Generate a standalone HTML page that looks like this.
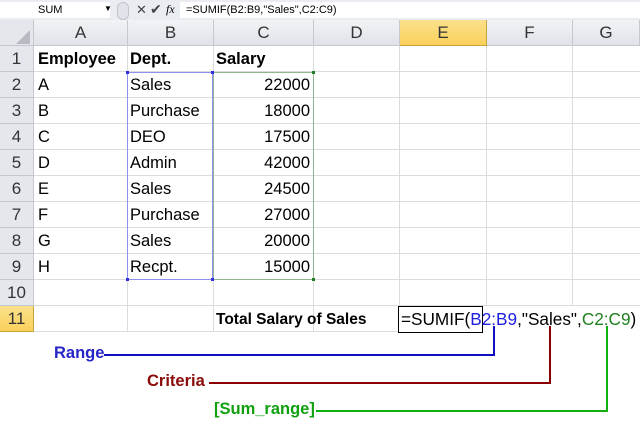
<!DOCTYPE html>
<html><head><style>
body{margin:0;width:640px;height:436px;overflow:hidden;background:#fff;font-family:"Liberation Sans",sans-serif;position:relative}
.a{position:absolute;white-space:nowrap}
.hl{position:absolute;background:#dadcdd}
.ch{position:absolute;top:20px;height:26px;background:linear-gradient(#f1f3f6,#dfe3e8);border-right:1px solid #c5c9cf;border-bottom:1px solid #c5c9cf;box-sizing:border-box;text-align:center;font-size:17px;line-height:26px;color:#333}
.rh{position:absolute;left:0;width:34px;height:26px;background:#e4e7ec;border-bottom:1px solid #c5c9cf;border-right:1px solid #c5c9cf;box-sizing:border-box;text-align:center;font-size:17px;line-height:26px;color:#333}
.c{position:absolute;font-size:16.5px;line-height:26px;color:#000;white-space:nowrap}
.r{text-align:right}
</style></head><body>
<div class="a" style="left:0;top:0;width:640px;height:20px;background:#e9edf2;border-bottom:1px solid #c5c9cf"></div>
<div class="a" style="left:0;top:2px;width:110px;height:16px;background:#fff;font-size:11px;line-height:16px;padding-left:38px;box-sizing:border-box">SUM</div>
<div class="a" style="left:104px;top:4px;font-size:8px">▼</div>
<div class="a" style="left:117px;top:2px;width:10px;height:16px;border-radius:8px;background:#e0e4ea;border:1px solid #c0c4ca"></div>
<div class="a" style="left:136px;top:2px;font-size:13px;color:#444">✕</div>
<div class="a" style="left:150px;top:1px;font-size:14px;color:#444">✔</div>
<div class="a" style="left:166px;top:2px;font-size:12px;font-style:italic;font-family:'Liberation Serif',serif">fx</div>
<div class="a" style="left:180px;top:2px;width:460px;height:16px;background:#fff;font-size:11px;line-height:16px;padding-left:6px;box-sizing:border-box">=SUMIF(B2:B9,"Sales",C2:C9)</div>
<div class="a" style="left:0;top:20px;width:34px;height:26px;background:#e4e7ec;border-right:1px solid #c5c9cf;border-bottom:1px solid #c5c9cf;box-sizing:border-box"></div>
<div class="a" style="left:16px;top:30px;width:0;height:0;border-left:14px solid transparent;border-bottom:14px solid #b8bcc2"></div>
<div class="ch" style="left:34px;width:94px">A</div>
<div class="ch" style="left:128px;width:86px">B</div>
<div class="ch" style="left:214px;width:100px">C</div>
<div class="ch" style="left:314px;width:86px">D</div>
<div class="ch" style="left:400px;width:87px;background:linear-gradient(#fbe08c,#f9d15a);border-color:#c9a33c">E</div>
<div class="ch" style="left:487px;width:86px">F</div>
<div class="ch" style="left:573px;width:67px">G</div>
<div class="hl" style="left:127px;top:46px;width:1px;height:286px"></div>
<div class="hl" style="left:213px;top:46px;width:1px;height:286px"></div>
<div class="hl" style="left:313px;top:46px;width:1px;height:286px"></div>
<div class="hl" style="left:399px;top:46px;width:1px;height:286px"></div>
<div class="hl" style="left:486px;top:46px;width:1px;height:286px"></div>
<div class="hl" style="left:572px;top:46px;width:1px;height:286px"></div>
<div class="hl" style="left:34px;top:71px;width:606px;height:1px"></div>
<div class="hl" style="left:34px;top:97px;width:606px;height:1px"></div>
<div class="hl" style="left:34px;top:123px;width:606px;height:1px"></div>
<div class="hl" style="left:34px;top:149px;width:606px;height:1px"></div>
<div class="hl" style="left:34px;top:175px;width:606px;height:1px"></div>
<div class="hl" style="left:34px;top:201px;width:606px;height:1px"></div>
<div class="hl" style="left:34px;top:227px;width:606px;height:1px"></div>
<div class="hl" style="left:34px;top:253px;width:606px;height:1px"></div>
<div class="hl" style="left:34px;top:279px;width:606px;height:1px"></div>
<div class="hl" style="left:34px;top:305px;width:606px;height:1px"></div>
<div class="hl" style="left:34px;top:331px;width:606px;height:1px"></div>
<div class="rh" style="top:46px">1</div>
<div class="rh" style="top:72px">2</div>
<div class="rh" style="top:98px">3</div>
<div class="rh" style="top:124px">4</div>
<div class="rh" style="top:150px">5</div>
<div class="rh" style="top:176px">6</div>
<div class="rh" style="top:202px">7</div>
<div class="rh" style="top:228px">8</div>
<div class="rh" style="top:254px">9</div>
<div class="rh" style="top:280px">10</div>
<div class="rh" style="top:306px;background:linear-gradient(#fbe08c,#f9d15a);border-color:#c9a33c">11</div>
<div class="a" style="left:127px;top:72px;width:86px;height:208px;border:1px solid #9090f0;box-sizing:border-box"></div>
<div class="a" style="left:213px;top:72px;width:101px;height:208px;border:1px solid #90b890;box-sizing:border-box"></div>
<div class="a" style="left:126px;top:71px;width:3px;height:3px;background:#3030e0"></div>
<div class="a" style="left:211px;top:71px;width:3px;height:3px;background:#3030e0"></div>
<div class="a" style="left:126px;top:278px;width:3px;height:3px;background:#3030e0"></div>
<div class="a" style="left:211px;top:278px;width:3px;height:3px;background:#3030e0"></div>
<div class="a" style="left:312px;top:71px;width:3px;height:3px;background:#208020"></div>
<div class="a" style="left:312px;top:278px;width:3px;height:3px;background:#208020"></div>
<div class="c" style="left:38px;top:46px;font-weight:bold">Employee</div>
<div class="c" style="left:130px;top:46px;font-weight:bold">Dept.</div>
<div class="c" style="left:216px;top:46px;font-weight:bold">Salary</div>
<div class="c" style="left:38px;top:72px">A</div><div class="c" style="left:130px;top:72px">Sales</div><div class="c r" style="left:214px;width:96px;top:72px">22000</div>
<div class="c" style="left:38px;top:98px">B</div><div class="c" style="left:130px;top:98px">Purchase</div><div class="c r" style="left:214px;width:96px;top:98px">18000</div>
<div class="c" style="left:38px;top:124px">C</div><div class="c" style="left:130px;top:124px">DEO</div><div class="c r" style="left:214px;width:96px;top:124px">17500</div>
<div class="c" style="left:38px;top:150px">D</div><div class="c" style="left:130px;top:150px">Admin</div><div class="c r" style="left:214px;width:96px;top:150px">42000</div>
<div class="c" style="left:38px;top:176px">E</div><div class="c" style="left:130px;top:176px">Sales</div><div class="c r" style="left:214px;width:96px;top:176px">24500</div>
<div class="c" style="left:38px;top:202px">F</div><div class="c" style="left:130px;top:202px">Purchase</div><div class="c r" style="left:214px;width:96px;top:202px">27000</div>
<div class="c" style="left:38px;top:228px">G</div><div class="c" style="left:130px;top:228px">Sales</div><div class="c r" style="left:214px;width:96px;top:228px">20000</div>
<div class="c" style="left:38px;top:254px">H</div><div class="c" style="left:130px;top:254px">Recpt.</div><div class="c r" style="left:214px;width:96px;top:254px">15000</div>
<div class="c" style="left:216px;top:307px;font-weight:bold;font-size:15.5px">Total Salary of Sales</div>
<div class="a" style="left:398px;top:306px;width:242px;height:26px;background:#fff"></div>
<div class="a" style="left:398px;top:306px;width:85px;height:27px;border:1px solid #000;box-sizing:border-box"></div>
<div class="c" style="left:401px;top:306px;font-size:17.2px">=SUMIF(<span style="color:#2020e0">B2:B9</span>,"Sales",<span style="color:#208020">C2:C9</span>)</div>
<svg class="a" style="left:0;top:0" width="640" height="436">
<polyline points="104,355 494,355 494,326" fill="none" stroke="#1010c0" stroke-width="2"/>
<polyline points="209,383 550,383 550,326" fill="none" stroke="#8b0000" stroke-width="2"/>
<polyline points="316,411 607,411 607,326" fill="none" stroke="#10b010" stroke-width="2"/>
</svg>
<div class="a" style="left:54px;top:344px;font-size:16.5px;font-weight:bold;color:#2525c8">Range</div>
<div class="a" style="left:147px;top:372px;font-size:16.5px;font-weight:bold;color:#8b0a0a">Criteria</div>
<div class="a" style="left:214px;top:400px;font-size:16.5px;font-weight:bold;color:#10a010">[Sum_range]</div>
</body></html>
